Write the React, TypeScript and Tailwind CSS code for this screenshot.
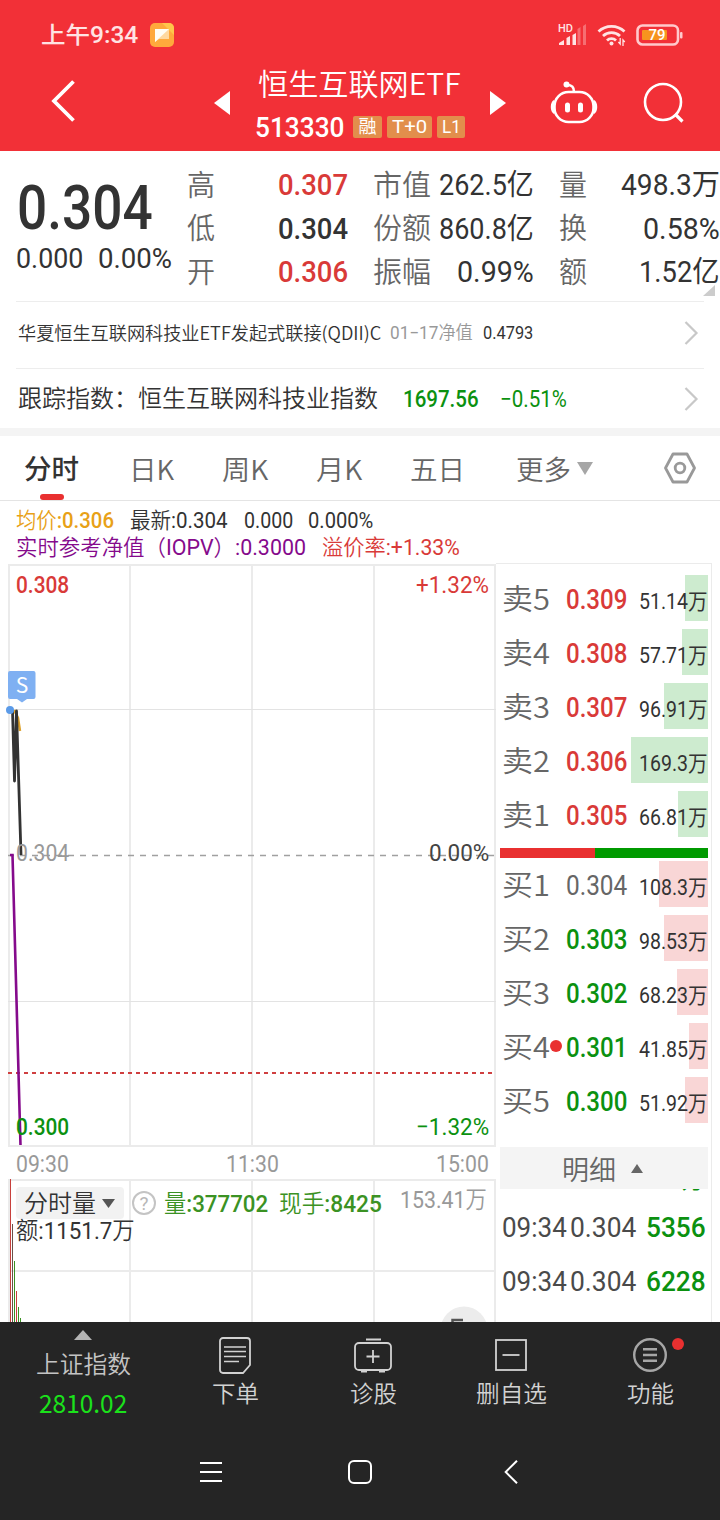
import { useLayoutEffect, useRef, useState } from 'react';
import type { ReactNode } from 'react';

interface FitProps {
  className?: string;
  children: ReactNode;
}

// Squeezes a single line of text to the width of its box
function Fit({ className = '', children }: FitProps) {
  const box = useRef<HTMLDivElement>(null);
  const text = useRef<HTMLSpanElement>(null);
  const [scale, setScale] = useState(1);

  useLayoutEffect(() => {
    if (box.current && text.current && text.current.offsetWidth > 0) {
      setScale(box.current.clientWidth / text.current.offsetWidth);
    }
  }, [children]);

  return (
    <div ref={box} className={`shrink-0 whitespace-nowrap leading-none ${className}`}>
      <span ref={text} className="inline-block origin-left" style={{ transform: `scaleX(${scale})` }}>
        {children}
      </span>
    </div>
  );
}

const STATS = [
  { a: '高', av: '0.307', ac: 'text-[#d93a38]', b: '市值', bv: '262.5亿', bw: 'w-[95px]', c: '量', cv: '498.3万', cw: 'w-[99px]' },
  { a: '低', av: '0.304', ac: 'text-[#333]', b: '份额', bv: '860.8亿', bw: 'w-[95px]', c: '换', cv: '0.58%', cw: 'w-[77px]' },
  { a: '开', av: '0.306', ac: 'text-[#d93a38]', b: '振幅', bv: '0.99%', bw: 'w-[77px]', c: '额', cv: '1.52亿', cw: 'w-[81px]' },
];

const TABS = [
  { name: '日K', box: 'w-[45px] ml-[50px]' },
  { name: '周K', box: 'w-[46px] ml-[48px]' },
  { name: '月K', box: 'w-[46px] ml-[48px]' },
  { name: '五日', box: 'w-[55px] ml-[48px]' },
  { name: '更多', box: 'w-[55px] ml-[51px]' },
];

const SELLS = [
  { name: '卖5', price: '0.309', vol: '51.14万', bar: 'w-[23px]' },
  { name: '卖4', price: '0.308', vol: '57.71万', bar: 'w-[26px]' },
  { name: '卖3', price: '0.307', vol: '96.91万', bar: 'w-[44px]' },
  { name: '卖2', price: '0.306', vol: '169.3万', bar: 'w-[77px]' },
  { name: '卖1', price: '0.305', vol: '66.81万', bar: 'w-[30px]' },
];

const BUYS = [
  { name: '买1', price: '0.304', vol: '108.3万', bar: 'w-[49px]' },
  { name: '买2', price: '0.303', vol: '98.53万', bar: 'w-[44px]' },
  { name: '买3', price: '0.302', vol: '68.23万', bar: 'w-[31px]' },
  { name: '买4', price: '0.301', vol: '41.85万', bar: 'w-[19px]', mine: true },
  { name: '买5', price: '0.300', vol: '51.92万', bar: 'w-[23px]' },
];

const TRADES = [
  { time: '09:34', price: '0.304', vol: '5356' },
  { time: '09:34', price: '0.304', vol: '6228' },
];

function StatusBar() {
  return (
    <div className="flex h-[70px] items-center pl-[41px] text-[#ffe3e3]">
      <Fit className="w-[97px] text-[23px] font-medium">上午9:34</Fit>
      <svg className="ml-3" width="24" height="24" viewBox="0 0 24 24">
        <rect width="24" height="24" rx="5" fill="#ffa93c" />
        <path d="M12 0h7a5 5 0 0 1 5 5v7z" fill="#ffc64b" />
        <path d="M5 6h14v10H9l-4 3z" fill="#ffd9a0" />
        <path d="M5 6h14L5 19z" fill="#fffdf5" />
      </svg>
      <svg className="ml-[384px]" width="30" height="24" viewBox="0 0 30 24" fill="currentColor">
        <text x="0" y="8.500" fontSize="11" fontWeight="500" fontFamily="Roboto, sans-serif">HD</text>
        <path d="M1 22v-2l5-3v5zM8.500 22v-7l3.500-2v9zM14.500 22v-10l3.500-2v12z" />
        <path d="M19.500 22V6l3-2v18zM25 22V3l3-2v21z" opacity=".35" />
      </svg>
      <svg className="ml-[9px]" width="30" height="24" viewBox="0 0 30 24" fill="none" stroke="currentColor" strokeWidth="2.800">
        <path d="M1.500 8.500a19 19 0 0 1 26 0M6 13a12.500 12.500 0 0 1 17 0M10 17.500a6.500 6.500 0 0 1 9 0" />
        <circle cx="14.500" cy="20.500" r="2" fill="currentColor" stroke="none" />
        <path d="M23.200 15v6l-1.800-2M26 23v-6l1.800 2" strokeWidth="1.300" />
      </svg>
      <svg className="ml-[9px]" width="48" height="22" viewBox="0 0 48 22">
        <rect x="1.500" y="1.500" width="40.500" height="19" rx="5" fill="none" stroke="#ffc9cc" strokeWidth="2.600" />
        <rect x="6" y="6" width="25" height="10" rx="1" fill="#f7931e" />
        <rect x="44" y="8" width="2.500" height="6.500" rx="1" fill="#ffc9cc" />
        <text x="12.500" y="16.300" fontSize="15" fontWeight="500" textLength="17" fontFamily="Roboto, sans-serif" fill="#fff">79</text>
      </svg>
    </div>
  );
}

function TitleBar() {
  return (
    <div className="flex h-[81px] items-start pl-[50px] text-white">
      <svg className="mt-[10px]" width="26" height="42" viewBox="0 0 26 42" fill="none" stroke="currentColor" strokeWidth="3.800">
        <path d="M23.500 1.500 4 21l19.500 19.500" />
      </svg>
      <svg className="ml-[138px] mt-[21px]" width="16" height="24" fill="currentColor">
        <path d="M16 0v24L0 12z" />
      </svg>
      <div className="ml-[25px] w-[212px]">
        <Fit className="-mt-[3px] ml-[3px] w-[203px] font-['Noto_Sans_CJK_SC',sans-serif] text-[30px] font-[350]">恒生互联网ETF</Fit>
        <div className="mt-[17px] flex h-[26px] items-center gap-[5px]">
          <Fit className="mr-[4px] w-[89px] pt-[2px] text-[28px] font-medium">513330</Fit>
          <div className="flex h-[22px] w-[29px] items-center justify-center rounded-xs bg-[#e28e4c]">
            <Fit className="w-[18px] text-[18px]">融</Fit>
          </div>
          <div className="flex h-[22px] w-[45px] items-center justify-center rounded-xs bg-[#e28e4c]">
            <Fit className="w-[35px] text-[18px]">T+0</Fit>
          </div>
          <div className="flex h-[22px] w-[28px] items-center justify-center rounded-xs bg-[#e28e4c]">
            <Fit className="w-[19px] text-[18px]">L1</Fit>
          </div>
        </div>
      </div>
      <svg className="ml-[23px] mt-[21px]" width="16" height="24" fill="currentColor">
        <path d="M0 0v24l16-12z" />
      </svg>
      <svg className="ml-[44px] mt-[11px]" width="48" height="44" viewBox="0 0 48 44" fill="none" stroke="currentColor" strokeWidth="2.600">
        <rect x="4.500" y="11" width="39" height="30" rx="14" />
        <path d="M24 11c0-5-2-7-7-7" />
        <circle cx="16.500" cy="3.500" r="3" fill="currentColor" stroke="none" />
        <path d="M4.500 20c-3.500 2-3.500 10 0 12M43.500 20c3.500 2 3.500 10 0 12" strokeWidth="2.200" fill="currentColor" />
        <path d="M17.500 24v5M30.500 24v5" strokeWidth="5" strokeLinecap="round" />
      </svg>
      <svg className="ml-[45px] mt-[12px]" width="42" height="42" viewBox="0 0 42 42" fill="none" stroke="currentColor" strokeWidth="2.600">
        <circle cx="20" cy="20" r="18" />
        <path d="m32 32 7.500 7.500" strokeWidth="3.200" />
      </svg>
    </div>
  );
}

function Chevron() {
  return (
    <svg className="ml-auto shrink-0" width="15" height="24" viewBox="0 0 15 24" fill="none" stroke="#c8c8c8" strokeWidth="2.200">
      <path d="m1.500 1 11 11-11 11" />
    </svg>
  );
}

function Quote() {
  return (
    <section className="relative flex h-[150px] pl-[16px] text-[#333]">
      <div className="w-[171px] pt-[27px]">
        <Fit className="ml-px w-[136px] text-[61px] font-medium">0.304</Fit>
        <div className="mt-[6px] flex gap-[15px]">
          <Fit className="w-[67px] text-[28px]">0.000</Fit>
          <Fit className="w-[74px] text-[28px]">0.00%</Fit>
        </div>
      </div>
      <div className="flex-1 pt-[13px] text-[29px]">
        {STATS.map((s) => (
          <div key={s.a} className="flex h-[43.500px] items-center">
            <Fit className="w-[28px] pt-px font-[350] text-[#666]">{s.a}</Fit>
            <Fit className={`ml-[63px] w-[70px] font-medium ${s.ac}`}>{s.av}</Fit>
            <Fit className="ml-[25px] w-[58px] pt-px font-[350] text-[#666]">{s.b}</Fit>
            <div className="flex w-[103px] justify-end">
              <Fit className={s.bw}>{s.bv}</Fit>
            </div>
            <Fit className="ml-[25px] w-[28px] pt-px font-[350] text-[#666]">{s.c}</Fit>
            <div className="flex flex-1 justify-end">
              <Fit className={s.cw}>{s.cv}</Fit>
            </div>
          </div>
        ))}
      </div>
      <svg className="absolute right-[5px] bottom-[5px]" width="12" height="11" fill="#ccc">
        <path d="M12 0v11H0z" />
      </svg>
    </section>
  );
}

function LinkRows() {
  return (
    <section className="h-[135px] border-b-8 border-[#f4f4f4] px-[16px] text-[#333]">
      <div className="flex h-[67px] items-center border-t border-[#ededed] pr-[5px] pb-[5px] pl-[2px] text-[18px]">
        <Fit className="w-[363px] pb-[2px] font-['Noto_Sans_CJK_SC',sans-serif] font-[350]">华夏恒生互联网科技业ETF发起式联接(QDII)C</Fit>
        <Fit className="ml-[9px] w-[83px] pt-px font-[350] text-[#999]"><span className="font-normal">01−17</span>净值</Fit>
        <Fit className="ml-[10px] w-[50px] pt-px">0.4793</Fit>
        <Chevron />
      </div>
      <div className="flex h-[60px] items-center border-t border-[#ededed] pr-[5px] pl-[2px] text-[24px]">
        <Fit className="w-[360px] pt-px font-[350]">跟踪指数：恒生互联网科技业指数</Fit>
        <Fit className="ml-[25px] w-[76px] pt-px font-medium text-[#0b9110]">1697.56</Fit>
        <Fit className="ml-[21px] w-[67px] pt-px text-[23px] text-[#0b9110]">−0.51%</Fit>
        <Chevron />
      </div>
    </section>
  );
}

function Tabs() {
  return (
    <nav className="flex h-[65px] items-center border-b border-[#e4e4e4] pl-[24px] text-[27px] font-[350] text-[#666]">
      <div className="relative pt-[4px]">
        <Fit className="w-[55px] font-medium text-[#333]">分时</Fit>
        <div className="absolute top-[41px] left-[16px] h-[6px] w-[24px] rounded-full bg-[#e93030]" />
      </div>
      {TABS.map((t) => (
        <Fit key={t.name} className={`font-['Noto_Sans_CJK_SC',sans-serif] ${t.box}`}>{t.name}</Fit>
      ))}
      <svg className="ml-[6px]" width="16" height="13" fill="#a6a6a6">
        <path d="M0 0h16L8 13z" />
      </svg>
      <svg className="ml-[70px]" width="34" height="32" viewBox="0 0 34 32" fill="none" stroke="#999" strokeWidth="2.800" strokeLinejoin="round">
        <path d="M10 2h14l7.500 14L24 30H10L2.500 16z" />
        <circle cx="17" cy="16" r="4.800" />
      </svg>
    </nav>
  );
}

function PriceLegend() {
  return (
    <div className="h-[63px] pt-[9px] pl-[16px] text-[22px] font-[350] text-[#333]">
      <div className="flex">
        <Fit className="w-[98px] text-[#e8a117]">均价<span className="font-medium">:0.306</span></Fit>
        <Fit className="ml-[16px] w-[98px]">最新<span className="font-normal">:0.304</span></Fit>
        <Fit className="ml-[16px] w-[49px] font-normal">0.000</Fit>
        <Fit className="ml-[15px] w-[65px] font-normal">0.000%</Fit>
      </div>
      <div className="mt-[5px] flex">
        <Fit className="w-[290px] text-[#850a8c]">实时参考净值（<span className="font-normal">IOPV</span>）<span className="font-normal">:0.3000</span></Fit>
        <Fit className="ml-[16px] w-[138px] text-[#d93a38]">溢价率<span className="font-normal">:+1.33%</span></Fit>
      </div>
    </div>
  );
}

function PriceChart() {
  return (
    <div className="relative h-[583px] w-[496px]">
      <svg width="496" height="583" viewBox="0 564 496 583" fill="none" className="block">
        <path d="M8 565h488M8 1146h488M9 564v583M130 564v583M252 564v583M374 564v583M495 564v583" stroke="#ebebeb" strokeWidth="2" />
        <path d="M8 709.500h488M8 1001.500h488" stroke="#e3e3e3" />
        <path d="M8 855.500h488" stroke="#a0a0a0" strokeWidth="1.500" strokeDasharray="6 6" />
        <path d="M8 1073h485" stroke="#cf3f40" strokeWidth="2" strokeDasharray="4 4" />
        <path d="M14 710l4 8 2 13" stroke="#dca02a" strokeWidth="2.500" />
        <path d="M12.500 710l2 71 2-70 4.500 144" stroke="#333" strokeWidth="2.800" strokeLinejoin="round" />
        <path d="M10 855h2.500l8 290" stroke="#850a8c" strokeWidth="2.600" />
        <circle cx="10" cy="710" r="4" fill="#5b9be8" />
        <path d="M10 671h23.500a2 2 0 0 1 2 2v24a2 2 0 0 1-2 2H27l-5 3.500-5-3.500h-7a2 2 0 0 1-2-2v-24a2 2 0 0 1 2-2z" fill="#7fb0f2" />
        <text x="22" y="693" textAnchor="middle" fontSize="21" fontFamily="'Noto Sans CJK SC', sans-serif" fill="#fff">S</text>
      </svg>
      <div className="absolute inset-0 flex flex-col justify-between pt-[9px] pr-[7px] pb-[8px] pl-[16px] text-[24px]">
        <div className="flex justify-between text-[#d93a38]">
          <Fit className="w-[53px] font-medium">0.308</Fit>
          <Fit className="w-[73px]">+1.32%</Fit>
        </div>
        <div className="flex justify-between pb-[6px]">
          <Fit className="w-[53px] text-[#999]">0.304</Fit>
          <Fit className="w-[60px] text-[#444]">0.00%</Fit>
        </div>
        <div className="flex justify-between text-[#0b9110]">
          <Fit className="w-[53px] font-medium">0.300</Fit>
          <Fit className="w-[73px]">−1.32%</Fit>
        </div>
      </div>
    </div>
  );
}

function VolumeChart() {
  return (
    <div className="relative h-[143px] w-[496px] overflow-hidden">
      <svg width="496" height="143" viewBox="0 1179 496 143" fill="none" className="block">
        <path d="M8 1180h488M8 1271h488M9 1180v142M130 1180v142M252 1180v142M374 1180v142M495 1180v142" stroke="#ebebeb" strokeWidth="2" />
        <path d="M10.500 1179v143M16.500 1291v31" stroke="#c8403c" />
        <path d="M12.500 1224v98" stroke="#6b5048" />
        <path d="M14.500 1261v61M18.500 1307v15M20.500 1318v4" stroke="#3b9223" />
        <circle cx="464" cy="1330" r="23.500" fill="#ececec" />
        <path d="M452.500 1323v-3h10.500" stroke="#555" strokeWidth="2.500" />
      </svg>
      <div className="absolute inset-0 pt-[8px] pl-[16px] text-[24px] font-[350] text-[#333]">
        <div className="flex items-center">
          <div className="flex h-[32px] w-[108px] items-center rounded bg-[#f2f2f2] pl-[8px]">
            <Fit className="w-[72px] pt-[2px]">分时量</Fit>
            <svg className="ml-[6px]" width="13" height="9" fill="#555">
              <path d="M0 0h13L6.500 9z" />
            </svg>
          </div>
          <div className="ml-[8px] flex size-[24px] items-center justify-center rounded-full border-2 border-[#c4c4c4] text-[19px] leading-none font-normal text-[#b8b8b8]">?</div>
          <Fit className="ml-[8px] w-[104px] pt-[2px] text-[#3b9223]">量<span className="font-medium">:377702</span></Fit>
          <Fit className="ml-[11px] w-[103px] pt-[2px] text-[#3b9223]">现手<span className="font-medium">:8425</span></Fit>
          <Fit className="ml-[18px] w-[87px] pb-[6px] text-[#999]"><span className="font-normal">153.41</span>万</Fit>
        </div>
        <Fit className="w-[119px]">额<span className="font-normal">:1151.7</span>万</Fit>
      </div>
    </div>
  );
}

interface LevelProps {
  name: string;
  price: string;
  vol: string;
  bar: string;
  tone: string;
  priceColor: string;
  mine?: boolean;
}

function Level({ name, price, vol, bar, tone, priceColor, mine }: LevelProps) {
  return (
    <div className="relative flex h-[46px] items-center">
      <div className={`absolute top-0 right-0 h-full ${bar} ${tone}`} />
      <Fit className="relative ml-[2px] w-[48px] pb-px font-['Noto_Sans_CJK_SC',sans-serif] text-[29px] font-[350] text-[#666]">{name}</Fit>
      {mine && <div className="absolute top-[17px] left-[50px] size-[12px] rounded-full bg-[#e93030]" />}
      <Fit className={`relative ml-[16px] w-[61px] pt-[4px] text-[28px] ${priceColor}`}>{price}</Fit>
      <div className="relative flex flex-1 justify-end pt-[7px]">
        <Fit className="w-[69px] text-[21.500px] text-[#333]">{vol}</Fit>
      </div>
    </div>
  );
}

function OrderBook() {
  return (
    <aside className="flex h-[759px] w-[216px] flex-col border-t border-r border-[#ebebeb] pr-[3px] pl-[4px]">
      <div className="flex flex-col gap-2 pt-[11px]">
        {SELLS.map((s) => (
          <Level key={s.name} {...s} tone="bg-[#cdebcf]" priceColor="text-[#d93a38] font-medium" />
        ))}
      </div>
      <div className="mt-[11px] flex h-[10px]">
        <div className="w-[95px] bg-[#e93030]" />
        <div className="flex-1 bg-[#009a00]" />
      </div>
      <div className="mt-[3px] flex flex-col gap-2">
        {BUYS.map((b) => (
          <Level
            key={b.name}
            {...b}
            tone="bg-[#f9d6d6]"
            priceColor={b.price === '0.304' ? 'text-[#666]' : 'text-[#0b9110] font-medium'}
          />
        ))}
      </div>
      <div className="mt-[24px] flex h-[42px] shrink-0 items-center bg-[#f4f4f4] pl-[62px]">
        <Fit className="w-[54px] pt-[6px] text-[27px] font-[350] text-[#666]">明细</Fit>
        <svg className="ml-[15px]" width="12" height="9" fill="#666">
          <path d="M0 9h12L6 0z" />
        </svg>
      </div>
      <div className="flex h-[12px] shrink-0 items-start justify-end overflow-hidden pr-[4px]">
        <Fit className="-mt-[19px] w-[22px] text-[22px] text-[#0b9110]">万</Fit>
      </div>
      {TRADES.map((t) => (
        <div key={t.vol} className="flex h-[54px] shrink-0 items-center pl-[2px] text-[28px] text-[#4a4a4a]">
          <Fit className="w-[65px]">{t.time}</Fit>
          <Fit className="ml-[3px] w-[66px]">{t.price}</Fit>
          <Fit className="ml-[10px] w-[60px] font-medium text-[#0b9110]">{t.vol}</Fit>
        </div>
      ))}
    </aside>
  );
}

function BottomBar() {
  return (
    <footer className="h-[198px] bg-[#252525] text-[23px] font-[350] text-[#d2d2d2]">
      <div className="flex h-[100px]">
        <div className="flex w-[166px] flex-col items-center pt-[8px]">
          <svg width="18" height="10" fill="#b4b4b4">
            <path d="M0 10h18L9 0z" />
          </svg>
          <Fit className="mt-[13px] w-[95px] text-[24px] text-[#c4c4c4]">上证指数</Fit>
          <Fit className="mt-[13px] w-[88px] font-['Noto_Sans_CJK_SC',sans-serif] text-[25px] font-normal text-[#1be21b]">2810.02</Fit>
        </div>
        <div className="flex w-[138px] flex-col items-center pt-[14px]">
          <svg width="34" height="38" viewBox="0 0 34 38" fill="none" stroke="currentColor" strokeWidth="1.800">
            <path d="M5 2h24a3 3 0 0 1 3 3v24l-7 8H5a3 3 0 0 1-3-3V5a3 3 0 0 1 3-3z" />
            <path d="M6 11h22M6 15.500h22M6 20.500h22M6 25.500h15" strokeWidth="1.600" />
          </svg>
          <Fit className="mt-[9px] w-[47px]">下单</Fit>
        </div>
        <div className="flex w-[138px] flex-col items-center pt-[14px]">
          <svg width="38" height="38" viewBox="0 0 38 38" fill="none" stroke="currentColor" strokeWidth="1.800">
            <rect x="1" y="7" width="36" height="27" rx="4" />
            <path d="M12 3.500h15M19 14v13M12.500 20.500h13M7 35.500h6M25 35.500h6" />
          </svg>
          <Fit className="mt-[9px] w-[47px]">诊股</Fit>
        </div>
        <div className="flex w-[138px] flex-col items-center pt-[14px]">
          <svg width="34" height="38" viewBox="0 0 34 38" fill="none" stroke="currentColor" strokeWidth="1.800">
            <rect x="2" y="4" width="30" height="30" />
            <path d="M8.500 19h17" />
          </svg>
          <Fit className="mt-[9px] w-[71px]">删自选</Fit>
        </div>
        <div className="relative flex w-[140px] flex-col items-center pt-[14px]">
          <svg width="36" height="38" viewBox="0 0 36 38" fill="none" stroke="#a6a6a6" strokeWidth="2.400">
            <circle cx="18" cy="19" r="15.800" />
            <path d="M11 13.300h14M11 19h14M11 24.700h14" />
          </svg>
          <div className="absolute top-[16px] left-[92px] size-[12px] rounded-full bg-[#e93030]" />
          <Fit className="mt-[9px] w-[47px]">功能</Fit>
        </div>
      </div>
      <div className="flex h-[100px] items-center pl-[200px] text-white">
        <svg width="22" height="22" fill="none" stroke="currentColor" strokeWidth="2">
          <path d="M0 2h22M0 11h22M0 20h22" />
        </svg>
        <svg className="ml-[126px]" width="24" height="24" fill="none" stroke="currentColor" strokeWidth="2">
          <rect x="1" y="1" width="22" height="22" rx="5" />
        </svg>
        <svg className="ml-[132px]" width="14" height="24" fill="none" stroke="currentColor" strokeWidth="2">
          <path d="M13 .7 1.700 12 13 23.300" />
        </svg>
      </div>
    </footer>
  );
}

export default function App() {
  return (
    <div className="h-[1520px] w-[720px] overflow-hidden bg-white font-[Roboto,'Noto_Sans_CJK_SC',sans-serif]">
      <header className="h-[151px] bg-[#f23037]">
        <StatusBar />
        <TitleBar />
      </header>
      <Quote />
      <LinkRows />
      <Tabs />
      <main className="flex h-[821px]">
        <div className="w-[496px]">
          <PriceLegend />
          <PriceChart />
          <div className="flex h-[32px] items-center justify-between pt-[2px] pr-[7px] pl-[16px] text-[24px] text-[#999]">
            <Fit className="w-[53px]">09:30</Fit>
            <Fit className="w-[53px]">11:30</Fit>
            <Fit className="w-[53px]">15:00</Fit>
          </div>
          <VolumeChart />
        </div>
        <div className="pt-[62px]">
          <OrderBook />
        </div>
      </main>
      <BottomBar />
    </div>
  );
}
